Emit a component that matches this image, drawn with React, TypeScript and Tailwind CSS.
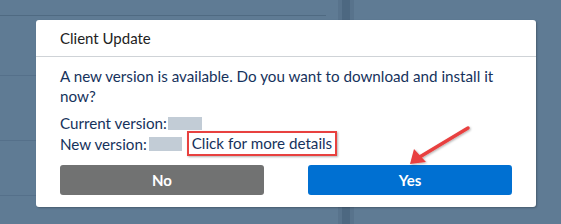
import React from "react";

export default function App() {
  return (
    <div
      className="relative w-[561px] h-[224px] overflow-hidden bg-[#5f7b94]"
      style={{ fontFamily: "Lato, 'Open Sans', sans-serif" }}
    >
      {/* background app */}
      <div className="flex h-full">
        <div className="w-[326px] flex flex-col">
          <div className="h-[15px]" />
          <div className="h-px bg-[#4f6a82]" />
          <div className="h-[59px]" />
          <div className="h-px bg-[#55708a]" />
          <div className="h-[64px]" />
          <div className="h-px bg-[#55708a]" />
          <div className="h-[54px]" />
          <div className="h-px bg-[#55708a]" />
        </div>
        <div className="w-[12px]" />
        <div className="w-[4px] bg-[#58738c]" />
        <div className="w-[8px] bg-[#4d6881]" />
        <div className="w-[4px] bg-[#58738c]" />
        <div className="flex-1" />
      </div>

      {/* dialog */}
      <div className="absolute left-[36px] top-[20px] w-[500px] h-[187px] bg-white rounded-[3px] shadow-[1px_1px_2px_rgba(0,0,0,0.25)] flex flex-col">
        <div className="h-[37px] flex items-center px-6 border-b border-[#cfd3d7] text-[15px] text-[#222]">
          Client Update
        </div>
        <div className="flex flex-col px-6 pt-[9px] text-[15.2px] leading-[20px] text-[#16325c]">
          <div>A new version is available. Do you want to download and install it now?</div>
          <div className="mt-[7px] flex items-center">
            <span>Current version:</span>
            <span className="ml-[1px] w-[34px] h-[13px] bg-[#c2ccd6]" />
          </div>
          <div className="-mt-[2px] flex items-center">
            <span>New version:</span>
            <span className="ml-[2px] w-[33px] h-[14px] bg-[#c2ccd6]" />
            <span className="ml-[5px] px-[3px] py-[1px] border-2 border-[#e8413f] leading-[19px] shadow-[1px_1px_2px_rgba(0,0,0,0.3)]">
              Click for more details
            </span>
          </div>
        </div>
        <div className="mt-auto mb-3 px-6 flex justify-between">
          <button className="w-[204px] h-[30px] rounded-[3px] bg-[#717272] text-white text-[15px] font-bold">
            No
          </button>
          <button className="w-[204px] h-[30px] rounded-[3px] bg-[#0070d2] text-white text-[15px] font-bold">
            Yes
          </button>
        </div>
      </div>

      {/* arrow */}
      <svg
        className="absolute left-[400px] top-[120px]"
        width="80"
        height="50"
        viewBox="400 120 80 50"
      >
        <defs>
          <filter id="sh" x="-20%" y="-20%" width="140%" height="140%">
            <feDropShadow dx="1" dy="1" stdDeviation="1" floodColor="#000" floodOpacity="0.3" />
          </filter>
        </defs>
        <g filter="url(#sh)">
          <line x1="468" y1="128" x2="418" y2="158" stroke="#e8403f" strokeWidth="3.5" strokeLinecap="round" />
          <polygon points="410,164 414,149 426,162" fill="#e8403f" />
        </g>
      </svg>
    </div>
  );
}
